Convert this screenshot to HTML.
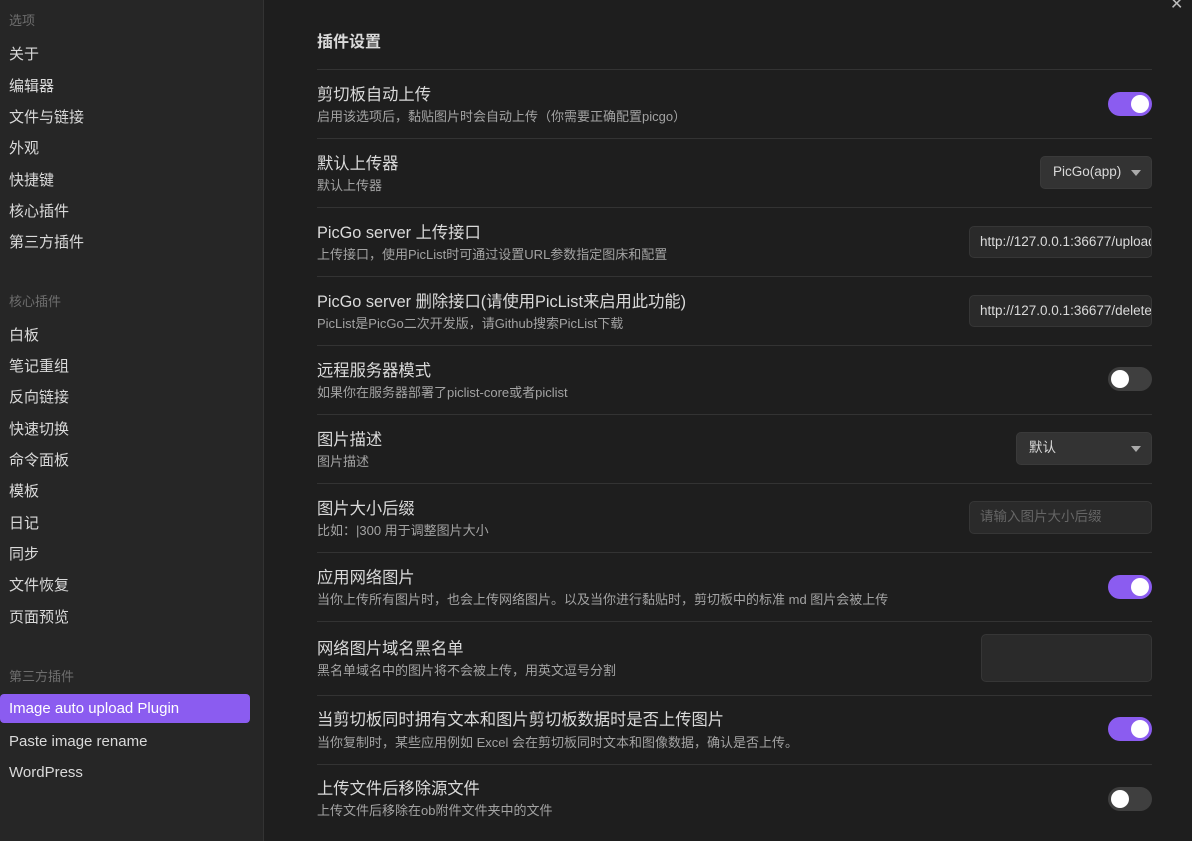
<!DOCTYPE html>
<html><head><meta charset="utf-8"><style>
*{margin:0;padding:0;box-sizing:border-box}
body{width:1192px;height:841px;background:#1e1e1e;font-family:"Liberation Sans","Noto Sans CJK SC",sans-serif;overflow:hidden;position:relative;color:#dadada}
#side{position:absolute;left:0;top:0;width:264px;height:841px;background:#262626;border-right:1px solid #333}
.h{position:absolute;left:9px;font-size:13px;color:#6e6e6e;line-height:16px}
.it{position:absolute;left:9px;font-size:15px;color:#dadada;line-height:20px;margin-top:1px}
.sel{position:absolute;left:0;top:694px;width:250px;height:29px;background:#8b5cf0;border-radius:4px;color:#fff;font-size:15px;line-height:30px;padding-left:9px}
.t{position:absolute;left:317px;font-size:16.3px;color:#dadada;line-height:20px;margin-top:2px}
.d{position:absolute;left:317px;font-size:13px;color:#a3a3a3;line-height:16px;margin-top:1px}
.sep{position:absolute;left:317px;width:835px;height:1px;background:#333}
.tg{position:absolute;left:1108px;width:44px;height:24px;border-radius:12px;background:#8b5cf0}
.tg::after{content:"";position:absolute;right:3px;top:3px;width:18px;height:18px;border-radius:50%;background:#fff}
.tg.off{background:#3f3f3f}
.tg.off::after{left:3px;right:auto}
.box{position:absolute;background:#2a2a2a;border:1px solid #363636;border-radius:5px;font-size:13.5px;color:#dadada;line-height:30px;padding-left:10px;overflow:hidden;white-space:nowrap}
.dd{background:#333;border-color:#3a3a3a}
.dd::after{content:"";position:absolute;right:10px;top:13px;border-left:5px solid transparent;border-right:5px solid transparent;border-top:6px solid #aaa}
</style></head><body>
<div id="side">
<div class="h" style="top:13px">选项</div>
<div class="it" style="top:44px">关于</div>
<div class="it" style="top:76px">编辑器</div>
<div class="it" style="top:107px">文件与链接</div>
<div class="it" style="top:138px">外观</div>
<div class="it" style="top:170px">快捷键</div>
<div class="it" style="top:201px">核心插件</div>
<div class="it" style="top:232px">第三方插件</div>
<div class="h" style="top:294px">核心插件</div>
<div class="it" style="top:325px">白板</div>
<div class="it" style="top:356px">笔记重组</div>
<div class="it" style="top:387px">反向链接</div>
<div class="it" style="top:419px">快速切换</div>
<div class="it" style="top:450px">命令面板</div>
<div class="it" style="top:481px">模板</div>
<div class="it" style="top:513px">日记</div>
<div class="it" style="top:544px">同步</div>
<div class="it" style="top:575px">文件恢复</div>
<div class="it" style="top:607px">页面预览</div>
<div class="h" style="top:669px">第三方插件</div>
<div class="sel">Image auto upload Plugin</div>
<div class="it" style="top:731px">Paste image rename</div>
<div class="it" style="top:762px">WordPress</div>
</div>
<div style="position:absolute;left:1170px;top:-6px;color:#bbb;font-size:16px">✕</div>
<div class="t" style="top:31px;font-weight:bold;font-size:16px">插件设置</div>
<div class="sep" style="top:69px"></div>
<div class="t" style="top:83px">剪切板自动上传</div><div class="d" style="top:108px">启用该选项后，黏贴图片时会自动上传（你需要正确配置picgo）</div>
<div class="tg" style="top:92px"></div>
<div class="sep" style="top:138px"></div>
<div class="t" style="top:152px">默认上传器</div><div class="d" style="top:177px">默认上传器</div>
<div class="box dd" style="left:1040px;top:156px;width:112px;height:33px;padding-left:12px">PicGo(app)</div>
<div class="sep" style="top:207px"></div>
<div class="t" style="top:221px">PicGo server 上传接口</div><div class="d" style="top:246px">上传接口，使用PicList时可通过设置URL参数指定图床和配置</div>
<div class="box" style="left:969px;top:226px;width:183px;height:32px">http://127.0.0.1:36677/upload</div>
<div class="sep" style="top:276px"></div>
<div class="t" style="top:290px">PicGo server 删除接口(请使用PicList来启用此功能)</div><div class="d" style="top:315px">PicList是PicGo二次开发版，请Github搜索PicList下载</div>
<div class="box" style="left:969px;top:295px;width:183px;height:32px">http://127.0.0.1:36677/delete</div>
<div class="sep" style="top:345px"></div>
<div class="t" style="top:359px">远程服务器模式</div><div class="d" style="top:384px">如果你在服务器部署了piclist-core或者piclist</div>
<div class="tg off" style="top:367px"></div>
<div class="sep" style="top:414px"></div>
<div class="t" style="top:428px">图片描述</div><div class="d" style="top:453px">图片描述</div>
<div class="box dd" style="left:1016px;top:432px;width:136px;height:33px;padding-left:12px">默认</div>
<div class="sep" style="top:483px"></div>
<div class="t" style="top:497px">图片大小后缀</div><div class="d" style="top:522px">比如：|300 用于调整图片大小</div>
<div class="box" style="left:969px;top:501px;width:183px;height:33px;color:#666">请输入图片大小后缀</div>
<div class="sep" style="top:552px"></div>
<div class="t" style="top:566px">应用网络图片</div><div class="d" style="top:591px">当你上传所有图片时，也会上传网络图片。以及当你进行黏贴时，剪切板中的标准 md 图片会被上传</div>
<div class="tg" style="top:575px"></div>
<div class="sep" style="top:621px"></div>
<div class="t" style="top:637px">网络图片域名黑名单</div><div class="d" style="top:662px">黑名单域名中的图片将不会被上传，用英文逗号分割</div>
<div class="box" style="left:981px;top:634px;width:171px;height:48px"></div>
<div class="sep" style="top:695px"></div>
<div class="t" style="top:708px">当剪切板同时拥有文本和图片剪切板数据时是否上传图片</div><div class="d" style="top:734px">当你复制时，某些应用例如 Excel 会在剪切板同时文本和图像数据，确认是否上传。</div>
<div class="tg" style="top:717px"></div>
<div class="sep" style="top:764px"></div>
<div class="t" style="top:777px">上传文件后移除源文件</div><div class="d" style="top:802px">上传文件后移除在ob附件文件夹中的文件</div>
<div class="tg off" style="top:787px"></div>
</body></html>
